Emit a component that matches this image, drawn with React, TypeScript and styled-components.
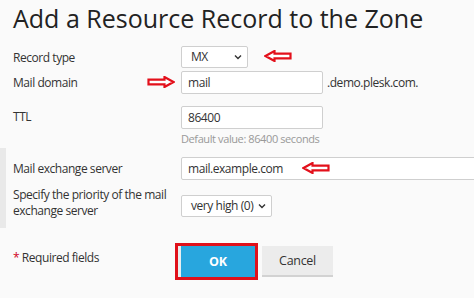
import React from "react";
import styled, { createGlobalStyle } from "styled-components";

const Global = createGlobalStyle`
  html, body { margin: 0; padding: 0; background: #fafafa; }
  body { font-family: "Open Sans", "Liberation Sans", sans-serif; color: #333; overflow: hidden; }
`;

const Page = styled.div`
  width: 474px;
  height: 298px;
  background: #fafafa;
  overflow: hidden;
`;

const Title = styled.h1`
  margin: 0;
  padding: 1px 0 0 13px;
  height: 36px;
  font-size: 25px;
  line-height: 34px;
  font-weight: 400;
  color: #222;
  white-space: nowrap;
`;

const Form = styled.div`
  display: flex;
  flex-direction: column;
  padding-left: 13px;
`;

const Row = styled.div<{ $mt: number; $align?: string }>`
  display: flex;
  align-items: ${(p) => p.$align || "center"};
  margin-top: ${(p) => p.$mt}px;
`;

const Label = styled.div<{ $lh?: number }>`
  width: 168px;
  flex: none;
  font-size: 12px;
  letter-spacing: -0.45px;
  line-height: ${(p) => p.$lh || 15}px;
  color: #333;
  white-space: nowrap;
  position: relative;
`;

const Field = styled.div`
  display: flex;
  flex-direction: column;
  position: relative;
`;

const Inline = styled.div`
  display: flex;
  align-items: center;
  position: relative;
`;

const Input = styled.div<{ $w: number }>`
  width: ${(p) => p.$w}px;
  height: 23px;
  box-sizing: border-box;
  background: #fff;
  border: 1px solid #cfcfcf;
  border-radius: 2px;
  padding: 0 6px;
  font-size: 12px;
  letter-spacing: -0.45px;
  line-height: 21px;
  color: #333;
  white-space: nowrap;
`;

const Select = styled.div<{ $w: number }>`
  width: ${(p) => p.$w}px;
  height: 22px;
  box-sizing: border-box;
  background: #fff;
  border: 1px solid #cfcfcf;
  border-radius: 2px;
  padding: 0 5px 0 9px;
  font-size: 12px;
  letter-spacing: -0.45px;
  line-height: 20px;
  color: #333;
  white-space: nowrap;
  display: flex;
  align-items: center;
  justify-content: space-between;
`;

const Suffix = styled.span`
  font-size: 12px;
  letter-spacing: -0.45px;
  margin-left: 4px;
  color: #333;
  white-space: nowrap;
`;

const Hint = styled.div`
  font-size: 11px;
  letter-spacing: -0.4px;
  color: #999;
  margin-top: 2px;
  white-space: nowrap;
`;

const Group = styled.div`
  margin-left: -13px;
  padding-left: 7px;
  border-left: 6px solid #e9e9e9;
  margin-top: 2px;
  padding-top: 9px;
  padding-bottom: 9px;
`;

const Footer = styled.div`
  display: flex;
  align-items: center;
  margin-top: 15px;
`;

const Required = styled.div`
  width: 162px;
  font-size: 12px;
  letter-spacing: -0.45px;
  color: #333;
  margin-top: -9px;
  span { color: #d0021b; }
`;

const Highlight = styled.div`
  border: 3px solid #e0101a;
  display: flex;
`;

const OkButton = styled.div`
  width: 74px;
  height: 31px;
  background: #28a6de;
  border-left: 3px solid #e8eef0;
  color: #fff;
  font-weight: 700;
  font-size: 12.5px;
  display: flex;
  align-items: center;
  justify-content: center;
`;

const CancelButton = styled.div`
  margin-left: 4px;
  width: 71px;
  height: 29px;
  background: #ececec;
  border-bottom: 2px solid #d2d2d2;
  color: #333;
  font-size: 12.5px;
  letter-spacing: -0.3px;
  display: flex;
  align-items: center;
  justify-content: center;
`;

const ArrowWrap = styled.span<{ $left: number; $top: number }>`
  position: absolute;
  left: ${(p) => p.$left}px;
  top: ${(p) => p.$top}px;
  display: block;
  line-height: 0;
`;

const Chevron = () => (
  <svg width="8" height="6" viewBox="0 0 8 6">
    <path d="M1 1.5 L4 4.5 L7 1.5" fill="none" stroke="#333" strokeWidth="1.4" />
  </svg>
);

const Arrow = ({ dir, left, top }: { dir: "left" | "right"; left: number; top: number }) => (
  <ArrowWrap $left={left} $top={top}>
    <svg width="28" height="12" viewBox="0 0 28 12" style={dir === "right" ? { transform: "scaleX(-1)" } : undefined}>
      <path
        d="M1.5 6 L10.5 1 L10.5 3.6 L26.5 3.6 L26.5 8.4 L10.5 8.4 L10.5 11 Z"
        fill="#fff"
        stroke="#e3101b"
        strokeWidth="2.2"
        strokeLinejoin="miter"
      />
    </svg>
  </ArrowWrap>
);

export default function App() {
  return (
    <Page>
      <Global />
      <Title>Add a Resource Record to the Zone</Title>
      <Form>
        <Row $mt={9}>
          <Label>Record type</Label>
          <Inline>
            <Select $w={67}>
              MX <Chevron />
            </Select>
            <Arrow dir="left" left={83} top={4} />
          </Inline>
        </Row>
        <Row $mt={3}>
          <Label>
            Mail domain
            <Arrow dir="right" left={134} top={1} />
          </Label>
          <Inline>
            <Input $w={142}>mail</Input>
            <Suffix>.demo.plesk.com.</Suffix>
          </Inline>
        </Row>
        <Row $mt={12} $align="flex-start">
          <Label style={{ marginTop: 3 }}>TTL</Label>
          <Field>
            <Input $w={142}>86400</Input>
            <Hint>Default value: 86400 seconds</Hint>
          </Field>
        </Row>
        <Group>
          <Row $mt={0}>
            <Label>Mail exchange server</Label>
            <Inline>
              <Input $w={300}>mail.example.com</Input>
              <Arrow dir="left" left={121} top={5} />
            </Inline>
          </Row>
          <Row $mt={7}>
            <Label $lh={16}>
              Specify the priority of the mail
              <br />
              exchange server
            </Label>
            <Select $w={91} style={{ marginTop: 5 }}>
              very high (0) <Chevron />
            </Select>
          </Row>
        </Group>
        <Footer>
          <Required>
            <span>*</span> Required fields
          </Required>
          <Highlight>
            <OkButton>OK</OkButton>
          </Highlight>
          <CancelButton>Cancel</CancelButton>
        </Footer>
      </Form>
    </Page>
  );
}
